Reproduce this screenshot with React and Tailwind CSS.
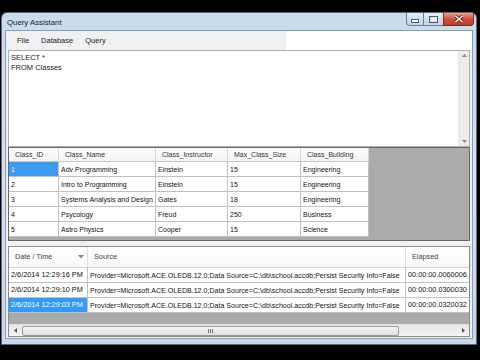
import React from 'react'

const classCols = [
  { name: 'Class_ID', w: 50 },
  { name: 'Class_Name', w: 97 },
  { name: 'Class_Instructor', w: 72 },
  { name: 'Max_Class_Size', w: 73 },
  { name: 'Class_Building', w: 68 },
]

const classRows = [
  ['1', 'Adv Programming', 'Einstein', '15', 'Engineering'],
  ['2', 'Intro to Programming', 'Einstein', '15', 'Engineering'],
  ['3', 'Systems Analysis and Design', 'Gates', '18', 'Engineering'],
  ['4', 'Psycology', 'Freud', '250', 'Business'],
  ['5', 'Astro Physics', 'Cooper', '15', 'Science'],
]

const src = 'Provider=Microsoft.ACE.OLEDB.12.0;Data Source=C:\\db\\school.accdb;Persist Security Info=False'

const logRows = [
  ['2/6/2014 12:29:16 PM', src, '00:00:00.0060006'],
  ['2/6/2014 12:29:10 PM', src, '00:00:00.0300030'],
  ['2/6/2014 12:29:03 PM', src, '00:00:00.0320032'],
]

const logWidths = [79, 318, 65, 12]

function CaptionButtons() {
  return (
    <div className="flex h-[13px] mr-[2px]">
      <div className="w-[18px] h-full rounded-bl-[4px] border border-t-0 border-[#6f7f92] bg-gradient-to-b from-[#e4ecf5] to-[#c3d3e6] flex items-center justify-center">
        <svg width="8" height="4" viewBox="0 0 8 4" className="mt-[3px]">
          <rect x="0.5" y="0.5" width="7" height="3" fill="#fff" stroke="#4a5a6e" />
        </svg>
      </div>
      <div className="w-[19px] h-full border-b border-[#6f7f92] bg-gradient-to-b from-[#e4ecf5] to-[#c3d3e6] flex items-center justify-center">
        <svg width="9" height="7" viewBox="0 0 9 7">
          <rect x="0.5" y="0.5" width="8" height="6" fill="none" stroke="#4a5a6e" />
          <rect x="2" y="2.5" width="5" height="2" fill="none" stroke="#fff" />
        </svg>
      </div>
      <div className="w-[31px] h-full rounded-br-[4px] border border-t-0 border-[#7a2a20] bg-gradient-to-b from-[#e8a090] via-[#d0503c] to-[#c03a28] flex items-center justify-center">
        <svg width="10" height="8" viewBox="0 0 10 8">
          <path d="M1.5 1 L8.5 7 M8.5 1 L1.5 7" stroke="#5a1a10" strokeWidth="3" />
          <path d="M1.5 1 L8.5 7 M8.5 1 L1.5 7" stroke="#fff" strokeWidth="1.6" />
        </svg>
      </div>
    </div>
  )
}

function ClassGrid() {
  return (
    <div className="h-[94px] border border-[#696969] bg-[#ababab] flex flex-col text-[7px] leading-none text-[#111]">
      <div className="flex h-[14px] w-[360px] bg-gradient-to-b from-white to-[#f3f3f3] border-b border-[#c8c8c8]">
        {classCols.map((c) => (
          <div
            key={c.name}
            style={{ width: c.w }}
            className="shrink-0 h-full flex items-center pl-[6px] border-r border-[#d8d8d8] text-[#333]"
          >
            {c.name}
          </div>
        ))}
      </div>
      {classRows.map((r, i) => (
        <div key={i} className="flex h-[15px] w-[360px] bg-white border-b border-[#c0c0c0]">
          {r.map((v, j) => (
            <div
              key={j}
              style={{ width: classCols[j].w }}
              className={`shrink-0 h-full flex items-center pl-[2px] border-r border-[#c0c0c0] whitespace-nowrap overflow-hidden ${
                i === 0 && j === 0 ? 'bg-[#3c9af0] text-white' : ''
              }`}
            >
              {v}
            </div>
          ))}
        </div>
      ))}
    </div>
  )
}

function LogGrid() {
  return (
    <div className="flex-1 border border-[#8a8a8a] bg-[#ababab] flex flex-col text-[7.3px] leading-none text-[#111]">
      <div className="flex h-[21px] bg-gradient-to-b from-white to-[#f7f8fa] border-b border-[#d5d5d5]">
        <div style={{ width: logWidths[0] }} className="shrink-0 h-full flex items-center pl-[6px] pr-[3px] border-r border-[#dedede] text-[#444]">
          <span className="flex-1">Date / Time</span>
          <svg width="6" height="4" viewBox="0 0 6 4">
            <path d="M0 0 L6 0 L3 3.5 Z" fill="#8a8a8a" />
          </svg>
        </div>
        <div style={{ width: logWidths[1] }} className="shrink-0 h-full flex items-center pl-[6px] border-r border-[#dedede] text-[#444]">
          Source
        </div>
        <div style={{ width: logWidths[2] }} className="shrink-0 h-full flex items-center pl-[6px] border-r border-[#dedede] text-[#444]">
          Elapsed
        </div>
        <div className="flex-1 h-full" />
      </div>
      {logRows.map((r, i) => (
        <div key={i} className="flex h-[15px] bg-white border-b border-[#c0c0c0] overflow-hidden">
          {r.map((v, j) => (
            <div
              key={j}
              style={{ width: logWidths[j] }}
              className={`shrink-0 h-full flex items-center pl-[2px] border-r border-[#c0c0c0] whitespace-nowrap overflow-hidden ${
                i === 2 && j === 0 ? 'bg-[#3399ff] text-white' : ''
              } ${j === 1 ? 'text-[7px] tracking-[0.04px]' : ''}`}
            >
              {v}
            </div>
          ))}
          <div className="flex-1 h-full" />
        </div>
      ))}
      <div className="flex-1" />
      <div className="h-[12px] bg-gradient-to-b from-[#e6e6e6] to-[#f4f4f4] border-t border-[#e0e0e0] flex items-center">
        <div className="w-[12px] flex items-center justify-center">
          <svg width="3" height="5" viewBox="0 0 3 5">
            <path d="M3 0 L0 2.5 L3 5 Z" fill="#555" />
          </svg>
        </div>
        <div className="ml-[1px] w-[377px] h-[10px] rounded-[2px] border border-[#9a9a9a] bg-gradient-to-b from-[#f6f6f6] to-[#dcdcdc] flex items-center justify-center">
          <div className="flex gap-[1px]">
            <div className="w-[1px] h-[4px] bg-[#777]" />
            <div className="w-[1px] h-[4px] bg-[#777]" />
            <div className="w-[1px] h-[4px] bg-[#777]" />
          </div>
        </div>
        <div className="flex-1" />
        <div className="w-[12px] flex items-center justify-center">
          <svg width="3" height="5" viewBox="0 0 3 5">
            <path d="M0 0 L3 2.5 L0 5 Z" fill="#555" />
          </svg>
        </div>
      </div>
    </div>
  )
}

export default function App() {
  return (
    <div className="w-[480px] h-[360px] bg-black pt-[12px] font-['Liberation_Sans',Arial,sans-serif] overflow-hidden">
      <div className="ml-[1px] w-[476px] h-[333px] rounded-t-[6px] border border-[#5d6b7c] bg-gradient-to-b from-[#c8dbef] via-[#d3e2f2] to-[#c6d8ec] flex flex-col">
        <div className="h-[17px] flex items-start justify-between">
          <div className="pl-[5px] pt-[6px] text-[7.8px] leading-none text-[#1a1a1a]">Query Assistant</div>
          <CaptionButtons />
        </div>
        <div className="flex-1 mx-[3px] mb-[5px] border border-[#8c9cb0] bg-[#f0f0f0] flex flex-col">
          <div className="h-[19px] flex">
            <div className="w-[280px] flex items-center gap-[12px] pl-[11px] pt-[1px] text-[7.5px] text-[#1a1a1a] bg-[#f0f0f0]">
              <span>File</span>
              <span>Database</span>
              <span>Query</span>
            </div>
            <div className="flex-1 bg-white" />
          </div>
          <div className="flex-1 flex flex-col px-[2px] pb-[1px]">
            <div className="h-[97px] border border-[#abadb3] bg-white flex">
              <div className="flex-1 pl-[2px] pt-[2px] text-[7.5px] leading-[9.5px] text-[#222]">
                <div>SELECT *</div>
                <div>FROM Classes</div>
              </div>
              <div className="w-[11px] bg-[#ececec] border-l border-[#e4e4e4] flex flex-col items-center justify-between py-[3px]">
                <svg width="5" height="3" viewBox="0 0 5 3">
                  <path d="M0 3 L2.5 0 L5 3 Z" fill="#8a8a8a" />
                </svg>
                <svg width="5" height="3" viewBox="0 0 5 3">
                  <path d="M0 0 L2.5 3 L5 0 Z" fill="#8a8a8a" />
                </svg>
              </div>
            </div>
            <ClassGrid />
            <div className="h-[5px]" />
            <LogGrid />
          </div>
        </div>
      </div>
    </div>
  )
}
